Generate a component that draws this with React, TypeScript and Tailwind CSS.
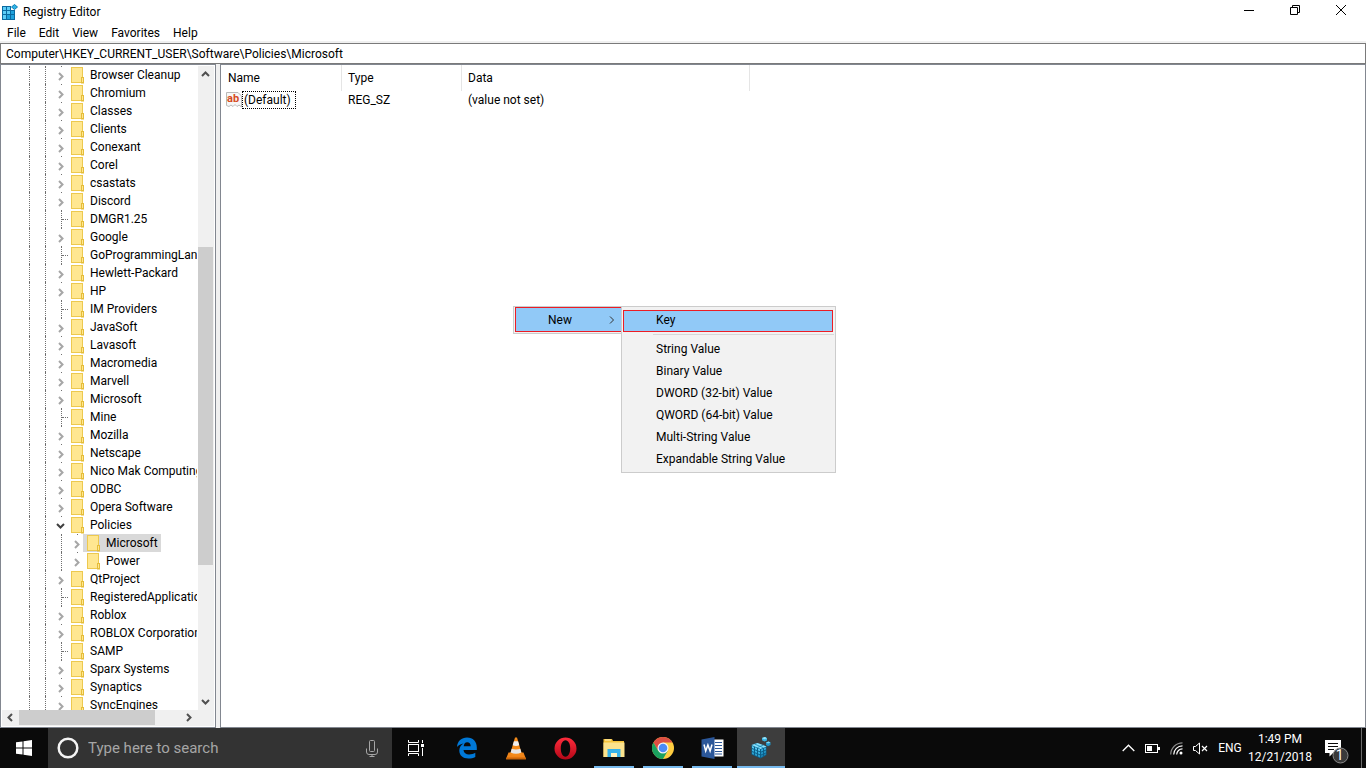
import type { ReactNode } from 'react';

type Node = {
  name: string;
  leaf?: boolean;
  open?: boolean;
  child?: boolean;
  selected?: boolean;
};

const TREE: Node[] = [
  { name: 'Browser Cleanup' },
  { name: 'Chromium' },
  { name: 'Classes' },
  { name: 'Clients' },
  { name: 'Conexant' },
  { name: 'Corel' },
  { name: 'csastats' },
  { name: 'Discord' },
  { name: 'DMGR1.25', leaf: true },
  { name: 'Google' },
  { name: 'GoProgrammingLanguage', leaf: true },
  { name: 'Hewlett-Packard' },
  { name: 'HP' },
  { name: 'IM Providers', leaf: true },
  { name: 'JavaSoft' },
  { name: 'Lavasoft' },
  { name: 'Macromedia' },
  { name: 'Marvell' },
  { name: 'Microsoft' },
  { name: 'Mine', leaf: true },
  { name: 'Mozilla' },
  { name: 'Netscape' },
  { name: 'Nico Mak Computing' },
  { name: 'ODBC' },
  { name: 'Opera Software' },
  { name: 'Policies', open: true },
  { name: 'Microsoft', child: true, selected: true },
  { name: 'Power', child: true },
  { name: 'QtProject' },
  { name: 'RegisteredApplications', leaf: true },
  { name: 'Roblox' },
  { name: 'ROBLOX Corporation' },
  { name: 'SAMP', leaf: true },
  { name: 'Sparx Systems' },
  { name: 'Synaptics' },
  { name: 'SyncEngines' },
];

const MENUS = ['File', 'Edit', 'View', 'Favorites', 'Help'];

const NEW_ITEMS = [
  'String Value',
  'Binary Value',
  'DWORD (32-bit) Value',
  'QWORD (64-bit) Value',
  'Multi-String Value',
  'Expandable String Value',
];

function RegistryIcon() {
  return (
    <svg width="17" height="17" viewBox="0 0 17 17">
      <rect x="0" y="2" width="13" height="14" fill="#0a6aa1" />
      {[3, 7, 11].map((y) =>
        [1, 5, 9].map((x) => (
          <rect key={`${x}-${y}`} x={x} y={y} width="3" height="4" fill={x + y > 14 ? '#1fa2dc' : '#5ccdf7'} />
        ))
      )}
      <path d="M0 6.500H13M0 10.500H13" stroke="#0a6aa1" />
      <rect x="9" y="0" width="8" height="6" fill="#fff" />
      <path d="M12.500 0.500L15.500 3L12.500 5.500L9.500 3z" fill="#2fb3e6" stroke="#0a7fb8" />
    </svg>
  );
}

function Folder() {
  return (
    <svg width="13" height="17" viewBox="0 0 13 17" className="shrink-0">
      <rect x="0.500" y="0.500" width="11" height="15" fill="#ffe791" stroke="#edc94f" />
      <rect x="10.500" y="10.500" width="2" height="5.500" fill="#ffe791" stroke="#e5bd3a" />
    </svg>
  );
}

function Arrow({ dir, color = '#505050' }: { dir: 'up' | 'down' | 'left' | 'right'; color?: string }) {
  const d = {
    up: 'M2 7L5.500 3.500L9 7',
    down: 'M2 4L5.500 7.500L9 4',
    left: 'M7 2L3.500 5.500L7 9',
    right: 'M4 2L7.500 5.500L4 9',
  }[dir];
  return (
    <svg width="11" height="11" viewBox="0 0 11 11" fill="none" stroke={color} strokeWidth="2">
      <path d={d} />
    </svg>
  );
}

// Dotted line that joins a node to its parent, with the expander on top of it.
function Connector({ node }: { node: Node }) {
  if (node.leaf) {
    return (
      <span className="flex w-[10px] shrink-0 items-center self-stretch border-l border-dotted border-[#707070]">
        <span className="w-[6px] border-t border-dotted border-[#707070]" />
      </span>
    );
  }
  return (
    <span className="flex w-[10px] shrink-0 flex-col self-stretch">
      <span className="h-px border-l border-dotted border-[#707070]" />
      <span className={node.open ? '-ml-[6px] mt-[3px]' : '-ml-[6px] mt-1'}>
        <Arrow dir={node.open ? 'down' : 'right'} color={node.open ? '#404040' : '#a6a6a6'} />
      </span>
    </span>
  );
}

function TreeRow({ node }: { node: Node }) {
  return (
    <li className="flex h-[18px] items-center pl-[27px] whitespace-nowrap">
      <span className="w-4 shrink-0 self-stretch border-l border-dotted border-[#707070]" />
      <span className="w-4 shrink-0 self-stretch border-l border-dotted border-[#707070]" />
      {node.child && <span className="w-4 shrink-0 self-stretch border-l border-dotted border-[#707070]" />}
      <Connector node={node} />
      <button
        className={`flex h-[18px] items-center text-left ${
          node.selected ? '-ml-1 bg-[#d9d9d9] pr-[3px] pl-1' : ''
        }`}
      >
        <Folder />
        <span className="pl-[6px]">{node.name}</span>
      </button>
    </li>
  );
}

function TreePanel() {
  return (
    <nav
      aria-label="Registry keys"
      className="flex w-[216px] shrink-0 flex-col border border-[#828790] bg-white p-px"
    >
      <div className="flex min-h-0 flex-1">
        <ul className="mr-px min-w-0 flex-1 overflow-hidden">
          {TREE.map((node, i) => (
            <TreeRow key={i} node={node} />
          ))}
        </ul>
        <div className="flex w-4 shrink-0 flex-col bg-[#f0f0f0] pr-px">
          <button aria-label="Scroll up" className="flex h-[17px] items-center justify-center">
            <Arrow dir="up" />
          </button>
          <div className="flex-[164]" />
          <div className="flex-[318] bg-[#cdcdcd]" />
          <div className="flex-[128]" />
          <button aria-label="Scroll down" className="flex h-[17px] items-center justify-center">
            <Arrow dir="down" />
          </button>
        </div>
      </div>
      <div className="flex h-4 shrink-0 bg-[#f0f0f0] pr-[17px] pb-px">
        <button aria-label="Scroll left" className="flex w-[17px] items-center justify-center">
          <Arrow dir="left" />
        </button>
        <div className="flex-[136] bg-[#cdcdcd]" />
        <div className="flex-[25]" />
        <button aria-label="Scroll right" className="flex w-[17px] items-center justify-center">
          <Arrow dir="right" />
        </button>
      </div>
    </nav>
  );
}

function StringValueIcon() {
  return (
    <svg width="16" height="16" viewBox="0 0 16 16" className="shrink-0">
      <path
        d="M0.500 0.500H12L15.500 4V15L13 13L11 14.500L9 12.500L7 14.500L5 13L3 14.500L0.500 13.500z"
        fill="#f7f7f7"
        stroke="#b9b9b9"
      />
      <text x="1" y="10" fontSize="11" fontWeight="700" fill="#d64a22">
        ab
      </text>
    </svg>
  );
}

function ValuesPanel() {
  return (
    <main className="min-w-0 flex-1 border border-[#828790] bg-white">
      <table className="w-full table-fixed border-separate border-spacing-0 text-left">
        <thead>
          <tr className="h-[26px]">
            <th className="w-[121px] border-r border-[#e5e5e5] p-0 pl-[7px] font-normal">Name</th>
            <th className="w-[120px] border-r border-[#e5e5e5] p-0 pl-[6px] font-normal">Type</th>
            <th className="w-[288px] border-r border-[#e5e5e5] p-0 pl-[6px] font-normal">Data</th>
            <th className="p-0" />
          </tr>
        </thead>
        <tbody>
          <tr className="h-[18px]">
            <td className="p-0 pl-[5px]">
              <div className="flex items-center">
                <StringValueIcon />
                <button className="h-[18px] w-[54px] border border-dotted border-black pl-px text-left leading-4">
                  (Default)
                </button>
              </div>
            </td>
            <td className="p-0 pl-[6px]">REG_SZ</td>
            <td className="p-0 pl-[6px]">(value not set)</td>
            <td className="p-0" />
          </tr>
        </tbody>
      </table>
    </main>
  );
}

function ContextMenu() {
  return (
    <div className="absolute top-[306px] left-[513px] flex items-start">
      <div role="menu" className="w-[109px] border border-[#cccccc] bg-[#f2f2f2] px-px pb-px">
        <button
          role="menuitem"
          className="flex h-[25px] w-[107px] items-center justify-between border border-[#ed1c24] bg-[#91c9f7] pr-1 pl-8"
        >
          New
          <svg width="10" height="10" viewBox="0 0 10 10" fill="none" stroke="#333">
            <path d="M3 1.500L6.500 5L3 8.500" />
          </svg>
        </button>
      </div>
      <div role="menu" className="-ml-px w-[215px] border border-[#cccccc] bg-[#f2f2f2] px-px pt-[3px] pb-[2px]">
        <button
          role="menuitem"
          className="flex h-[22px] w-[210px] items-center border border-[#ed1c24] bg-[#91c9f7] pb-[2px] pl-8"
        >
          Key
        </button>
        <div className="mt-[2px] mb-[3px] ml-[30px] h-px bg-[#d7d7d7]" />
        {NEW_ITEMS.map((item) => (
          <button key={item} role="menuitem" className="flex h-[22px] w-full items-center pl-[33px]">
            {item}
          </button>
        ))}
      </div>
    </div>
  );
}

function EdgeIcon() {
  return (
    <svg width="22" height="22" viewBox="0 0 22 22">
      <path
        d="M1 10C1.500 4 5.500 0.500 11 0.500C17 0.500 20.800 4.500 20.800 10.500V13H7.500C7.700 16 10 17.400 13 17.400C15.500 17.400 17.600 16.700 19.300 15.700V20C17.300 21 15 21.500 12.300 21.500C6.800 21.500 3.300 18.300 3.300 13.500C3.300 10.400 4.800 8 7.600 6.400C4.800 6.700 2.500 7.900 1 10ZM7.700 9.300H14.700C14.700 6.700 13.300 5.200 11.200 5.200C9.200 5.200 7.900 6.800 7.700 9.300Z"
        fill="#0078d7"
      />
    </svg>
  );
}

function VlcIcon() {
  return (
    <svg width="22" height="23" viewBox="0 0 22 23">
      <path d="M3.500 15.500H18.500L21 22H1z" fill="#f08519" />
      <path d="M1.500 20.500H20.500L21 22.500H1z" fill="#c96508" />
      <path d="M10 0.500H12L17 17.500Q11 20.500 5 17.500z" fill="#f48b1b" />
      <path d="M8.900 4.300H13.100L14.300 8.300Q11 9.500 7.700 8.300z" fill="#efefef" />
      <path d="M6.700 11.700Q11 13.200 15.300 11.700L16.400 15.500Q11 18 5.600 15.500z" fill="#e6e6e6" />
    </svg>
  );
}

function OperaIcon() {
  return (
    <svg width="23" height="23" viewBox="0 0 23 23">
      <defs>
        <linearGradient id="opera" x1="0" y1="0" x2="0" y2="1">
          <stop offset="0" stopColor="#ff2c3c" />
          <stop offset="1" stopColor="#b30717" />
        </linearGradient>
      </defs>
      <path
        fillRule="evenodd"
        fill="url(#opera)"
        d="M11.500 0.500a11 11 0 1 0 0 22a11 11 0 1 0 0-22zM11.500 3.300c2.900 0 4.700 3.600 4.700 8.200s-1.800 8.200-4.700 8.200s-4.700-3.600-4.700-8.200s1.800-8.200 4.700-8.200z"
      />
    </svg>
  );
}

function ExplorerIcon() {
  return (
    <svg width="22" height="20" viewBox="0 0 22 20">
      <path d="M0.500 1H9L10 3H21V19H0.500z" fill="#f5c33b" />
      <path d="M2 1.500H8V2.500H2z" fill="#fff3c4" />
      <path d="M0.500 4.500H21.500V19H0.500z" fill="#fbe28d" />
      <path d="M4.500 11H17.500V19H14V15H8V19H4.500z" fill="#35b1ea" />
      <path d="M8 15H14V19H8z" fill="#fdf0bf" />
    </svg>
  );
}

function ChromeIcon() {
  return (
    <svg width="22" height="22" viewBox="0 0 22 22">
      <circle cx="11" cy="11" r="11" fill="#ffcd41" />
      <path d="M1.470 5.500A11 11 0 0 1 20.530 5.500L11 5.500L6.200 13.800z" fill="#dd4f43" />
      <path d="M1.470 5.500A11 11 0 0 0 11 22L15.800 13.800L11 16L6.200 13.800z" fill="#1aa15f" />
      <circle cx="11" cy="11" r="5.500" fill="#f4f4f4" />
      <circle cx="11" cy="11" r="4.300" fill="#4c8bf5" />
    </svg>
  );
}

function WordIcon() {
  return (
    <svg width="23" height="22" viewBox="0 0 23 22">
      <rect x="10" y="2.500" width="12.500" height="17" fill="#fff" />
      <path d="M14 5.500H21M14 8.500H21M14 11.500H21M14 14.500H21M14 17H21" stroke="#2b579a" />
      <path d="M0.500 2.500L13.500 0V22L0.500 19.500z" fill="#2b579a" />
      <path d="M3 7.500L4.700 14L6.900 8L9.100 14L11 7.500" fill="none" stroke="#fff" strokeWidth="1.500" />
    </svg>
  );
}

function RegeditIcon() {
  return (
    <svg width="20" height="22" viewBox="0 0 20 22">
      <path d="M0.500 8L6.500 6L15.500 9.500V18L9.500 21.500L0.500 17.500z" fill="#0c5f8a" />
      <path d="M0.500 8L6.500 6L12 8L15.500 9.500L9.500 12z" fill="#8be0fa" />
      <path d="M3.500 7L12.500 10.800M6.500 10.500L12.500 8" stroke="#1585b5" strokeWidth="0.800" />
      <path d="M1 9L3 9.800V11.800L1 11zM4 10.200L6 11V13L4 12.200zM7 11.400L9 12.200V14.200L7 13.400z" fill="#56c9f0" />
      <path d="M1 12L3 12.800V14.800L1 14zM4 13.200L6 14V16L4 15.200zM7 14.400L9 15.200V17.200L7 16.400z" fill="#39b4e3" />
      <path d="M1 15L3 15.800V17.800L1 17zM4 16.200L6 17V19L4 18.200zM7 17.400L9 18.200V20.500L7 19.600z" fill="#2ba0d0" />
      <path d="M10 12.600L12 11.700V13.700L10 14.600zM13 11.300L15 10.400V12.400L13 13.300z" fill="#2fa9da" />
      <path d="M10 15.600L12 14.700V16.700L10 17.600zM13 14.300L15 13.400V15.400L13 16.300z" fill="#2193c5" />
      <path d="M10 18.400L12 17.500V19.300L10 20.400zM13 17.200L15 16.300V17.600L13 18.800z" fill="#1a83b3" />
      <path d="M11 1L14 0L16 1.200V3.600L13.500 4.500L11 3.200z" fill="#39b4e3" />
      <path d="M11 1L14 0L16 1.200L13.300 2.200z" fill="#9ae5fb" />
      <path d="M15 5.500L17.500 4.500L19.500 5.600V8L17 9.200L15 8z" fill="#2193c5" />
      <path d="M15 5.500L17.500 4.500L19.500 5.600L17 6.600z" fill="#7cd8f6" />
    </svg>
  );
}

const APPS: { name: string; icon: ReactNode; running?: boolean; active?: boolean }[] = [
  { name: 'Microsoft Edge', icon: <EdgeIcon /> },
  { name: 'VLC media player', icon: <VlcIcon /> },
  { name: 'Opera', icon: <OperaIcon /> },
  { name: 'File Explorer', icon: <ExplorerIcon />, running: true },
  { name: 'Google Chrome', icon: <ChromeIcon />, running: true },
  { name: 'Word', icon: <WordIcon />, running: true },
  { name: 'Registry Editor', icon: <RegeditIcon />, active: true },
];

function TrayButton({ label, children }: { label: string; children: ReactNode }) {
  return (
    <button aria-label={label} className="flex w-6 items-center justify-center">
      {children}
    </button>
  );
}

function Taskbar() {
  return (
    <footer className="flex h-10 shrink-0 bg-[#0a0a0a] text-white">
      <button aria-label="Start" className="flex w-12 items-center justify-center">
        <svg width="16" height="16" viewBox="0 0 16 16" fill="#fff">
          <path d="M0 2.300L6.500 1.400V7.500H0zM7.500 1.200L16 0V7.500H7.500zM0 8.500H6.500V14.600L0 13.700zM7.500 8.500H16V16L7.500 14.800z" />
        </svg>
      </button>
      <label className="flex w-[344px] items-center bg-[#333333] pl-[9px]">
        <svg width="22" height="22" viewBox="0 0 22 22" className="shrink-0">
          <circle cx="11" cy="11" r="9.300" fill="none" stroke="#f4f4f4" strokeWidth="2.500" />
        </svg>
        <input
          type="search"
          aria-label="Search"
          placeholder="Type here to search"
          className="min-w-0 flex-1 bg-transparent pl-[9px] text-[15px] outline-none placeholder:text-[#a6a6a6]"
        />
        <svg width="12" height="17" viewBox="0 0 12 17" fill="none" stroke="#a6a6a6" className="mr-[14px] shrink-0">
          <rect x="3.500" y="0.500" width="5" height="11" rx="1" />
          <path d="M0.500 8.500V12Q0.500 14.500 3 14.500H9Q11.500 14.500 11.500 12V8.500M6 14.500V16.500M3.500 16.500H8.500" />
        </svg>
      </label>
      <button aria-label="Task View" className="flex w-12 items-center justify-center">
        <svg width="16" height="16" viewBox="0 0 16 16" fill="none" stroke="#fff">
          <path d="M0.500 0V2.500H10.500V0M0.500 16V13.500H10.500V16" />
          <rect x="0.500" y="4.500" width="10" height="7" />
          <path d="M14.500 0V3M14.500 8V16" />
          <rect x="13" y="4" width="3" height="3" fill="#fff" stroke="none" />
        </svg>
      </button>

      <div className="flex gap-px pl-[3px]">
        {APPS.map((app) => (
          <button
            key={app.name}
            aria-label={app.name}
            className={`flex w-12 flex-col items-center ${app.active ? 'bg-[#3d3d3d]' : ''}`}
          >
            <span className="flex flex-1 items-center pt-[2px]">{app.icon}</span>
            <span
              className={`h-[2px] ${
                app.active ? 'w-full bg-[#76b9ed]' : app.running ? 'w-10 bg-[#76b9ed]' : 'w-10'
              }`}
            />
          </button>
        ))}
      </div>

      <div className="ml-auto flex">
        <TrayButton label="Show hidden icons">
          <svg width="13" height="8" viewBox="0 0 13 8" fill="none" stroke="#fff" strokeWidth="1.300">
            <path d="M0.700 7L6.500 1.200L12.300 7" />
          </svg>
        </TrayButton>
        <TrayButton label="Battery">
          <svg width="15" height="9" viewBox="0 0 15 9">
            <rect x="0.500" y="0.500" width="12" height="8" fill="none" stroke="#fff" />
            <rect x="2" y="2" width="5" height="5" fill="#fff" />
            <rect x="13" y="3" width="2" height="3" fill="#fff" />
          </svg>
        </TrayButton>
        <TrayButton label="Network">
          <svg width="13" height="13" viewBox="0 0 13 13" fill="none" strokeWidth="1.200">
            <path d="M0.700 12.500A11.800 11.800 0 0 1 12.500 0.800" stroke="#8a8a8a" />
            <path d="M3.700 12.500A8.800 8.800 0 0 1 12.500 3.800" stroke="#fff" />
            <path d="M6.700 12.500A5.800 5.800 0 0 1 12.500 6.800" stroke="#fff" />
            <circle cx="11" cy="11" r="1.500" fill="#fff" />
          </svg>
        </TrayButton>
        <TrayButton label="Volume muted">
          <svg width="15" height="13" viewBox="0 0 15 13" fill="none" stroke="#fff">
            <path d="M0.500 4.500H2.500L6.500 1V12L2.500 8.500H0.500z" />
            <path d="M9 4L14 9M14 4L9 9" strokeWidth="1.200" />
          </svg>
        </TrayButton>
        <button className="w-9 text-center">ENG</button>
        <time dateTime="2018-12-21T13:49" className="flex w-16 flex-col items-center justify-center leading-[18px] whitespace-nowrap">
          <span>1:49 PM</span>
          <span>12/21/2018</span>
        </time>
        <button aria-label="1 new notification" className="flex w-[49px] items-center justify-center pt-2">
          <span className="relative">
            <svg width="24" height="24" viewBox="0 0 24 24">
              <path d="M0 0H16V13H8L4.500 16.500V13H0z" fill="#fff" />
              <path d="M3 3.500H13M3 6.500H13M3 9.500H9" stroke="#0a0a0a" />
              <circle cx="15.500" cy="15.500" r="7.500" fill="#3a3a3a" stroke="#8a8a8a" />
            </svg>
            <span className="absolute right-[5px] bottom-0 text-[14px] leading-[17px]">1</span>
          </span>
        </button>
        <button aria-label="Show desktop" className="w-[5px] border-l border-[#6a6a6a]" />
      </div>
    </footer>
  );
}

export default function App() {
  return (
    <div className="relative flex h-screen flex-col overflow-hidden bg-[#f0f0f0] font-['Roboto','Open_Sans',sans-serif] text-[12px] leading-4 text-black">
      <header className="bg-white">
        <div className="flex h-6 items-center pl-[2px]">
          <RegistryIcon />
          <h1 className="pl-1">Registry Editor</h1>
          <div className="ml-auto flex h-5 items-center self-start pr-[2px]">
            <button aria-label="Minimize" className="flex w-[46px] justify-center">
              <svg width="10" height="10" viewBox="0 0 10 10" stroke="#000">
                <path d="M0 5.500H10" />
              </svg>
            </button>
            <button aria-label="Restore" className="flex w-[46px] justify-center">
              <svg width="10" height="10" viewBox="0 0 10 10" fill="none" stroke="#000">
                <path d="M0.500 2.500H7.500V9.500H0.500zM2.500 2.500V0.500H9.500V7.500H7.500" />
              </svg>
            </button>
            <button aria-label="Close" className="flex w-[46px] justify-center">
              <svg width="10" height="10" viewBox="0 0 10 10" stroke="#000">
                <path d="M0 0L10 10M10 0L0 10" />
              </svg>
            </button>
          </div>
        </div>
        <div className="flex h-[17px] items-center gap-[13px] pl-[7px]">
          {MENUS.map((menu) => (
            <button key={menu}>{menu}</button>
          ))}
        </div>
      </header>

      <input
        aria-label="Address"
        defaultValue="Computer\HKEY_CURRENT_USER\Software\Policies\Microsoft"
        className="mt-[2px] h-[21px] shrink-0 border border-[#7a7a7a] bg-white px-[5px] outline-none"
      />

      <div className="flex min-h-0 flex-1 gap-1">
        <TreePanel />
        <ValuesPanel />
      </div>

      <Taskbar />
      <ContextMenu />
    </div>
  );
}
